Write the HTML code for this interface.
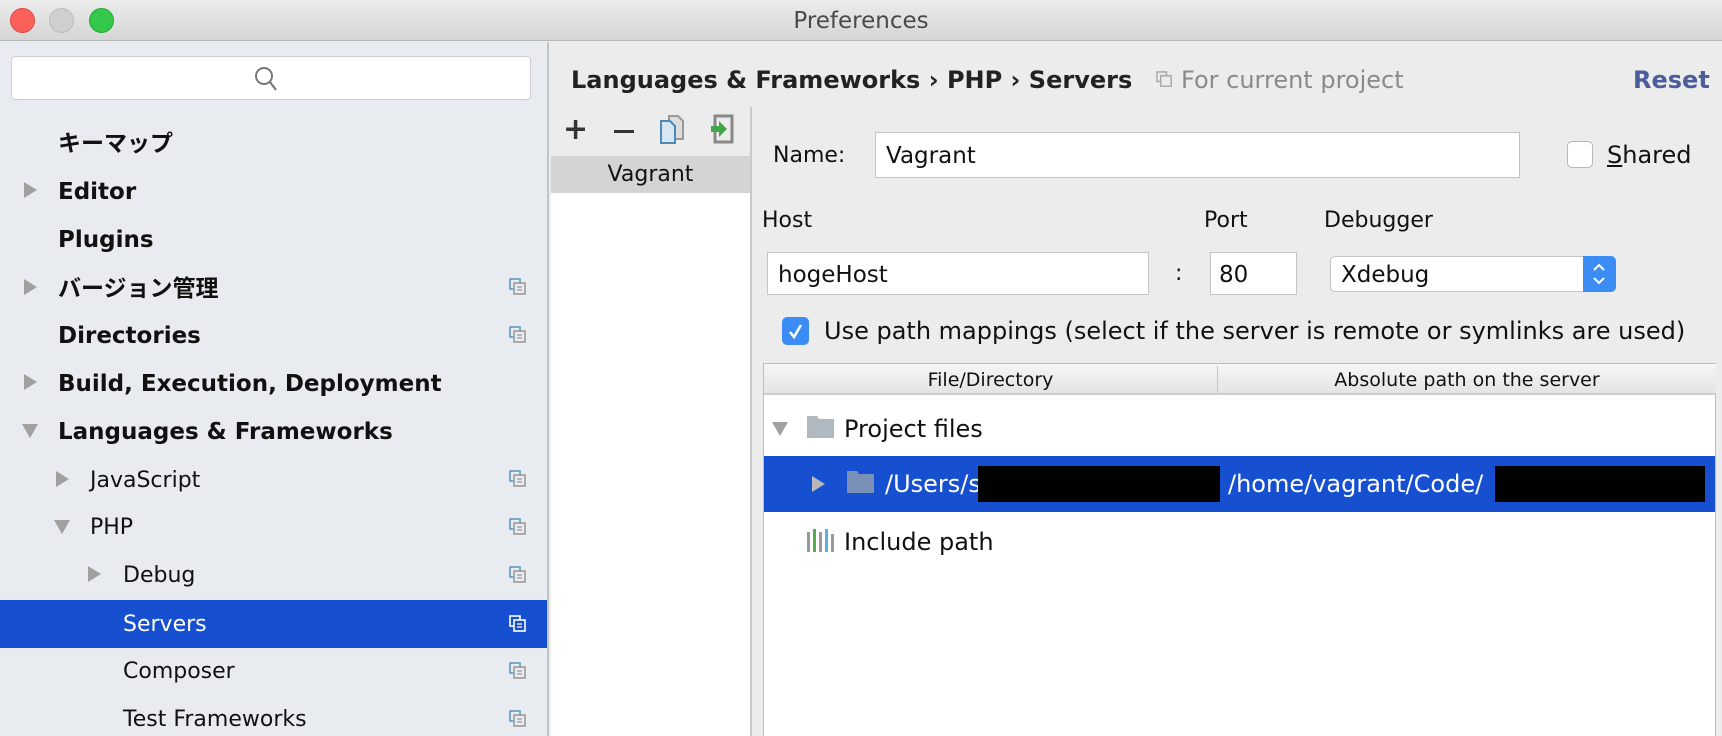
<!DOCTYPE html>
<html><head><meta charset="utf-8"><style>
*{margin:0;padding:0;box-sizing:border-box}
body{width:1722px;height:736px;overflow:hidden;background:#ececec;font-family:"DejaVu Sans","Noto Sans CJK JP",sans-serif;color:#111;position:relative}
.a{position:absolute;white-space:nowrap;line-height:32px}
.t{font-size:22px}
.t.b{font-size:23px}
.b{font-weight:bold}
.ic{position:absolute;left:509px;width:18px;height:18px}
.arr{position:absolute;width:0;height:0;border-top:8px solid transparent;border-bottom:8px solid transparent;border-left:13px solid #a0a0a0}
.dn{position:absolute;width:0;height:0;border-left:8px solid transparent;border-right:8px solid transparent;border-top:14px solid #a0a0a0}
.inp{position:absolute;background:#fff;border:1px solid #c4c4c4;font-size:23px;padding-left:10px;display:flex;align-items:center;padding-top:2px}
</style></head><body>
<div class="a" style="left:0;top:0;width:1722px;height:41px;background:linear-gradient(#ebebeb,#d6d6d6);border-bottom:1px solid #b8b8b8"></div>
<div class="a" style="left:10px;top:8px;width:25px;height:25px;border-radius:50%;background:#fc605b;border:1px solid #de4a44"></div>
<div class="a" style="left:49px;top:8px;width:25px;height:25px;border-radius:50%;background:#cfcfcf;border:1px solid #bcbcbc"></div>
<div class="a" style="left:89px;top:8px;width:25px;height:25px;border-radius:50%;background:#34c84a;border:1px solid #27a83a"></div>
<div class="a" style="left:0;width:1722px;top:5px;text-align:center;font-size:23px;color:#4a4a4a">Preferences</div>

<div class="a" style="left:0;top:42px;width:549px;height:694px;background:#e8ecf0;border-right:2px solid #c4c4c4"></div>
<div class="a" style="left:11px;top:56px;width:520px;height:44px;background:#fff;border:1px solid #cfcfcf;border-radius:4px"></div>
<svg class="a" style="left:253px;top:65px" width="26" height="28" viewBox="0 0 26 28"><circle cx="11" cy="11" r="8" fill="none" stroke="#777" stroke-width="2"/><line x1="17" y1="17" x2="23" y2="25" stroke="#777" stroke-width="2.2"/></svg>

<div class="a" style="left:0;top:600px;width:547px;height:48px;background:#1650d0"></div>

<div class="a t b" style="left:58px;top:128px">キーマップ</div>
<div class="arr" style="left:24px;top:182px"></div><div class="a t b" style="left:58px;top:176px">Editor</div>
<div class="a t b" style="left:58px;top:224px">Plugins</div>
<div class="arr" style="left:24px;top:279px"></div><div class="a t b" style="left:58px;top:273px">バージョン管理</div>
<div class="a t b" style="left:58px;top:320px">Directories</div>
<div class="arr" style="left:24px;top:374px"></div><div class="a t b" style="left:58px;top:368px">Build, Execution, Deployment</div>
<div class="dn" style="left:22px;top:424px"></div><div class="a t b" style="left:58px;top:416px">Languages &amp; Frameworks</div>
<div class="arr" style="left:56px;top:471px"></div><div class="a t" style="left:90px;top:465px">JavaScript</div>
<div class="dn" style="left:54px;top:520px"></div><div class="a t" style="left:90px;top:512px">PHP</div>
<div class="arr" style="left:88px;top:566px"></div><div class="a t" style="left:123px;top:560px">Debug</div>
<div class="a t" style="left:123px;top:609px;color:#fff">Servers</div>
<div class="a t" style="left:123px;top:656px">Composer</div>
<div class="a t" style="left:123px;top:704px">Test Frameworks</div>

<svg width="0" height="0" style="position:absolute"><defs><g id="cp"><rect x="1" y="1" width="10" height="10" fill="none" stroke="#5b9bc8" stroke-width="1.6"/><rect x="5" y="5" width="11" height="11" fill="#e8ecf0" stroke="#9a9a9a" stroke-width="1.6"/><line x1="8" y1="9" x2="13" y2="9" stroke="#9a9a9a" stroke-width="1.3"/><line x1="8" y1="12" x2="13" y2="12" stroke="#9a9a9a" stroke-width="1.3"/></g></defs></svg>
<svg class="ic" style="top:278px"><use href="#cp"/></svg>
<svg class="ic" style="top:326px"><use href="#cp"/></svg>
<svg class="ic" style="top:470px"><use href="#cp"/></svg>
<svg class="ic" style="top:518px"><use href="#cp"/></svg>
<svg class="ic" style="top:566px"><use href="#cp"/></svg>
<svg class="ic" style="top:615px"><g><rect x="1" y="1" width="10" height="10" fill="none" stroke="#fff" stroke-width="1.6"/><rect x="5" y="5" width="11" height="11" fill="#1650d0" stroke="#fff" stroke-width="1.6"/><line x1="8" y1="9" x2="13" y2="9" stroke="#fff" stroke-width="1.3"/><line x1="8" y1="12" x2="13" y2="12" stroke="#fff" stroke-width="1.3"/></g></svg>
<svg class="ic" style="top:662px"><use href="#cp"/></svg>
<svg class="ic" style="top:710px"><use href="#cp"/></svg>

<div class="a b" style="left:571px;top:64px;font-size:24px;color:#222">Languages &amp; Frameworks › PHP › Servers</div>
<svg class="a" style="left:1156px;top:71px" width="18" height="18"><g transform="scale(0.95)"><rect x="1" y="1" width="10" height="10" fill="none" stroke="#aaa" stroke-width="1.6"/><rect x="5" y="5" width="11" height="11" fill="#ececec" stroke="#aaa" stroke-width="1.6"/></g></svg>
<div class="a" style="left:1181px;top:64px;font-size:24px;color:#8a8a8a">For current project</div>
<div class="a b" style="left:1633px;top:64px;font-size:24px;color:#4b5d9a">Reset</div>

<div class="a" style="left:750px;top:107px;width:2px;height:629px;background:#c8c8c8"></div>
<div class="a" style="left:551px;top:156px;width:199px;height:37px;background:#d4d4d4"></div>
<div class="a" style="left:551px;top:193px;width:199px;height:543px;background:#fff"></div>
<div class="a" style="left:551px;width:199px;top:159px;text-align:center;font-size:22px">Vagrant</div>
<div class="a b" style="left:563px;top:114px;font-size:30px;color:#333">+</div>
<div class="a" style="left:614px;top:130px;width:20px;height:3px;background:#333"></div>
<svg class="a" style="left:659px;top:114px" width="30" height="32"><path d="M10 2h9l5 5v18h-14z" fill="#ddd" stroke="#999" stroke-width="2"/><path d="M2 7h9l5 5v17H2z" fill="#d6e6f3" stroke="#4f88b5" stroke-width="2"/></svg>
<svg class="a" style="left:710px;top:114px" width="24" height="30"><rect x="5" y="2" width="17" height="26" fill="none" stroke="#888" stroke-width="3"/><path d="M1 12h8v-5l8 8-8 8v-5H1z" fill="#3fa64a"/></svg>

<div class="a" style="left:773px;top:140px;font-size:22px">Name:</div>
<div class="inp" style="left:875px;top:132px;width:645px;height:46px">Vagrant</div>
<div class="a" style="left:1567px;top:141px;width:26px;height:27px;background:#fff;border:1px solid #b8b8b8;border-radius:5px"></div>
<div class="a" style="left:1607px;top:139px;font-size:24px"><u>S</u>hared</div>
<div class="a" style="left:762px;top:205px;font-size:22px">Host</div>
<div class="a" style="left:1204px;top:205px;font-size:22px">Port</div>
<div class="a" style="left:1324px;top:205px;font-size:22px">Debugger</div>
<div class="inp" style="left:767px;top:252px;width:382px;height:43px">hogeHost</div>
<div class="a" style="left:1175px;top:258px;font-size:22px">:</div>
<div class="inp" style="left:1210px;top:252px;width:87px;height:43px;padding-left:8px">80</div>
<div class="inp" style="left:1330px;top:256px;width:286px;height:36px;border-radius:5px">Xdebug</div>
<div class="a" style="left:1583px;top:256px;width:33px;height:36px;background:#3b8cf5;border-radius:0 5px 5px 0"></div>
<svg class="a" style="left:1591px;top:261px" width="16" height="26"><path d="M3 9l5-5 5 5M3 17l5 5 5-5" fill="none" stroke="#fff" stroke-width="2"/></svg>
<div class="a" style="left:782px;top:317px;width:27px;height:28px;background:#3b8cf5;border-radius:5px"></div>
<svg class="a" style="left:782px;top:317px" width="27" height="28"><path d="M8 15l4 5 7-12" fill="none" stroke="#fff" stroke-width="2.5"/></svg>
<div class="a" style="left:824px;top:315px;font-size:24px">Use path mappings (select if the server is remote or symlinks are used)</div>

<div class="a" style="left:763px;top:363px;width:953px;height:373px;background:#fff;border:1px solid #bdbdbd;border-bottom:none"></div>
<div class="a" style="left:764px;top:364px;width:952px;height:31px;background:linear-gradient(#f6f6f6,#e4e4e4);border-bottom:2px solid #cdcdcd"></div>
<div class="a" style="left:1217px;top:366px;width:1px;height:27px;background:#c4c4c4"></div>
<div class="a" style="left:764px;width:453px;top:364px;text-align:center;font-size:19px">File/Directory</div>
<div class="a" style="left:1218px;width:498px;top:364px;text-align:center;font-size:19px">Absolute path on the server</div>
<div class="dn" style="left:772px;top:422px"></div>
<svg class="a" style="left:806px;top:415px" width="29" height="24"><path d="M1 1h10l2 3h15v19H1z" fill="#b0b9c0"/></svg>
<div class="a" style="left:844px;top:413px;font-size:24px">Project files</div>
<div class="a" style="left:764px;top:456px;width:951px;height:56px;background:#1650d0"></div>
<div class="arr" style="left:812px;top:476px;border-left-color:#b8b8b8"></div>
<svg class="a" style="left:846px;top:470px" width="29" height="24"><path d="M1 1h10l2 3h15v19H1z" fill="#7a90b8"/></svg>
<div class="a" style="left:885px;top:468px;font-size:24px;color:#fff">/Users/s</div>
<div class="a" style="left:978px;top:466px;width:242px;height:36px;background:#000"></div>
<div class="a" style="left:1228px;top:468px;font-size:24px;color:#fff">/home/vagrant/Code/</div>
<div class="a" style="left:1495px;top:466px;width:210px;height:36px;background:#000"></div>
<svg class="a" style="left:806px;top:526px" width="28" height="26"><rect x="1" y="6" width="3" height="20" fill="#999"/><rect x="7" y="3" width="3" height="23" fill="#4caf50"/><rect x="13" y="6" width="3" height="20" fill="#999"/><rect x="19" y="3" width="3" height="23" fill="#5bb0e0"/><rect x="25" y="8" width="3" height="18" fill="#999"/></svg>
<div class="a" style="left:844px;top:526px;font-size:24px">Include path</div>
</body></html>
